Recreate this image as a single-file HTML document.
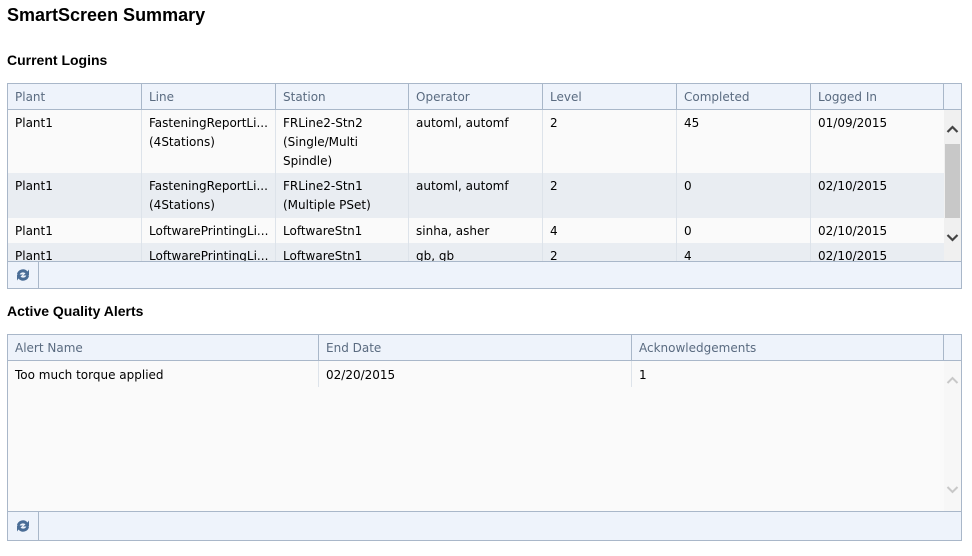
<!DOCTYPE html>
<html><head><meta charset="utf-8"><style>
*{margin:0;padding:0;box-sizing:border-box}
body{width:972px;height:556px;background:#fff;font-family:"DejaVu Sans",Verdana,sans-serif;font-size:12px;color:#000;position:relative;overflow:hidden}
.a{position:absolute}
h1{position:absolute;left:7px;top:5px;font-family:"Liberation Sans",Arial,sans-serif;font-size:18px;font-weight:bold}
h2{position:absolute;left:7px;font-family:"Liberation Sans",Arial,sans-serif;font-size:14px;font-weight:bold}
.grid{position:absolute;left:7px;width:955px;border:1px solid #a9b7c9;background:#fafafa;overflow:hidden}
.hd{position:absolute;left:0;top:0;right:0;height:26px;background:#eef3fb;border-bottom:1px solid #a9b7c9}
.hc{position:absolute;top:0;height:25px;border-right:1px solid #a9b7c9;color:#5a6b80;padding:6px 7px 0;line-height:15px}
.c{position:absolute;padding:4px 7px 0 7px;line-height:19px;white-space:nowrap;overflow:hidden;border-right:1px solid #dde3ea}
.row{position:absolute;left:0;width:936px}
.ft{position:absolute;left:0;right:0;bottom:0;height:27px;background:#eef3fb;border-top:1px solid #a9b7c9}
.rb{position:absolute;left:0;top:0;width:31px;height:26px;border-right:1px solid #a9b7c9}
</style></head><body>
<h1>SmartScreen Summary</h1>
<h2 style="top:52px">Current Logins</h2>
<div class="grid" style="top:83px;height:206px">
 <div class="hd">
  <div class="hc" style="left:0;width:134px">Plant</div>
  <div class="hc" style="left:134px;width:134px">Line</div>
  <div class="hc" style="left:268px;width:133px">Station</div>
  <div class="hc" style="left:401px;width:134px">Operator</div>
  <div class="hc" style="left:535px;width:134px">Level</div>
  <div class="hc" style="left:669px;width:134px">Completed</div>
  <div class="hc" style="left:803px;width:133px">Logged In</div>
 </div>
 <div class="row" style="top:26px;height:63px;background:#fafafa">
  <div class="c" style="left:0;width:134px;height:63px">Plant1</div>
  <div class="c" style="left:134px;width:134px;height:63px">FasteningReportLi...<br>(4Stations)</div>
  <div class="c" style="left:268px;width:133px;height:63px">FRLine2-Stn2<br>(Single/Multi<br>Spindle)</div>
  <div class="c" style="left:401px;width:134px;height:63px">automl, automf</div>
  <div class="c" style="left:535px;width:134px;height:63px">2</div>
  <div class="c" style="left:669px;width:134px;height:63px">45</div>
  <div class="c" style="left:803px;width:133px;height:63px;border:0">01/09/2015</div>
 </div>
 <div class="row" style="top:89px;height:45px;background:#e9edf2">
  <div class="c" style="left:0;width:134px;height:45px">Plant1</div>
  <div class="c" style="left:134px;width:134px;height:45px">FasteningReportLi...<br>(4Stations)</div>
  <div class="c" style="left:268px;width:133px;height:45px">FRLine2-Stn1<br>(Multiple PSet)</div>
  <div class="c" style="left:401px;width:134px;height:45px">automl, automf</div>
  <div class="c" style="left:535px;width:134px;height:45px">2</div>
  <div class="c" style="left:669px;width:134px;height:45px">0</div>
  <div class="c" style="left:803px;width:133px;height:45px;border:0">02/10/2015</div>
 </div>
 <div class="row" style="top:134px;height:25px;background:#fafafa">
  <div class="c" style="left:0;width:134px;height:25px">Plant1</div>
  <div class="c" style="left:134px;width:134px;height:25px">LoftwarePrintingLi...</div>
  <div class="c" style="left:268px;width:133px;height:25px">LoftwareStn1</div>
  <div class="c" style="left:401px;width:134px;height:25px">sinha, asher</div>
  <div class="c" style="left:535px;width:134px;height:25px">4</div>
  <div class="c" style="left:669px;width:134px;height:25px">0</div>
  <div class="c" style="left:803px;width:133px;height:25px;border:0">02/10/2015</div>
 </div>
 <div class="row" style="top:159px;height:20px;background:#e9edf2;overflow:hidden">
  <div class="c" style="left:0;width:134px;height:25px">Plant1</div>
  <div class="c" style="left:134px;width:134px;height:25px">LoftwarePrintingLi...</div>
  <div class="c" style="left:268px;width:133px;height:25px">LoftwareStn1</div>
  <div class="c" style="left:401px;width:134px;height:25px">gb, gb</div>
  <div class="c" style="left:535px;width:134px;height:25px">2</div>
  <div class="c" style="left:669px;width:134px;height:25px">4</div>
  <div class="c" style="left:803px;width:133px;height:25px;border:0">02/10/2015</div>
 </div>
 <div class="a" style="left:936px;top:26px;width:17px;height:153px;background:#f0f0f0">
  <div class="a" style="left:1px;top:34px;width:15px;height:74px;background:#c8c8c8"></div>
  <svg class="a" style="left:2px;top:15px" width="13" height="9"><path d="M1.5 7L6.5 2L11.5 7" stroke="#444" stroke-width="2.2" fill="none"/></svg>
  <svg class="a" style="left:2px;top:123px" width="13" height="9"><path d="M1.5 2L6.5 7L11.5 2" stroke="#444" stroke-width="2.2" fill="none"/></svg>
 </div>
 <div class="ft"><div class="rb"><svg class="a" style="left:7px;top:5px" width="16" height="16"><path d="M2 7A6 6 0 0 1 12.5 4.5L14 2.5V8.5H8L10.5 6.5A3.5 3.5 0 0 0 4.5 8Z" fill="#4a6d96"/><path d="M14 9A6 6 0 0 1 3.5 11.5L2 13.5V7.5H8L5.5 9.5A3.5 3.5 0 0 0 11.5 8Z" fill="#4a6d96"/></svg></div></div>
</div>
<h2 style="top:303px">Active Quality Alerts</h2>
<div class="grid" style="top:334px;height:207px">
 <div class="hd">
  <div class="hc" style="left:0;width:311px">Alert Name</div>
  <div class="hc" style="left:311px;width:313px">End Date</div>
  <div class="hc" style="left:624px;width:312px">Acknowledgements</div>
 </div>
 <div class="row" style="top:26px;height:26px">
  <div class="c" style="left:0;width:311px;height:26px;padding-top:5px">Too much torque applied</div>
  <div class="c" style="left:311px;width:313px;height:26px;padding-top:5px">02/20/2015</div>
  <div class="c" style="left:624px;width:312px;height:26px;padding-top:5px;border:0">1</div>
 </div>
 <div class="a" style="left:936px;top:26px;width:17px;height:151px;background:#f7f7f7">
  <svg class="a" style="left:2px;top:15px" width="13" height="9"><path d="M1.5 7L6.5 2L11.5 7" stroke="#c8c8c8" stroke-width="2" fill="none"/></svg>
  <svg class="a" style="left:2px;top:124px" width="13" height="9"><path d="M1.5 2L6.5 7L11.5 2" stroke="#c8c8c8" stroke-width="2" fill="none"/></svg>
 </div>
 <div class="ft" style="height:29px"><div class="rb" style="height:28px"><svg class="a" style="left:7px;top:6px" width="16" height="16"><path d="M2 7A6 6 0 0 1 12.5 4.5L14 2.5V8.5H8L10.5 6.5A3.5 3.5 0 0 0 4.5 8Z" fill="#4a6d96"/><path d="M14 9A6 6 0 0 1 3.5 11.5L2 13.5V7.5H8L5.5 9.5A3.5 3.5 0 0 0 11.5 8Z" fill="#4a6d96"/></svg></div></div>
</div>
</body></html>
